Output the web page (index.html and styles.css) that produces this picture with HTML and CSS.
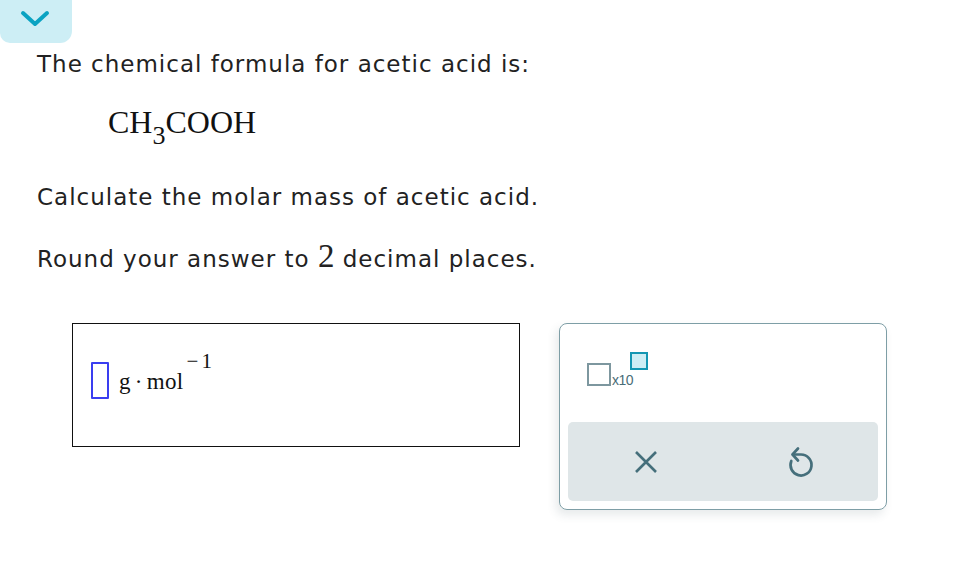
FILE: index.html
```html
<!DOCTYPE html>
<html>
<head>
<meta charset="utf-8">
<link rel="stylesheet" href="styles.css">
</head>
<body>
<div class="tab">
  <svg width="30" height="18" viewBox="0 0 30 18"><polyline points="3,3 15,14 27,3" fill="none" stroke="#0aa3c2" stroke-width="4" stroke-linecap="round" stroke-linejoin="round"/></svg>
</div>
<div class="content">
  <p class="line l1">The chemical formula for acetic acid is:</p>
  <div class="formula">CH<sub>3</sub>COOH</div>
  <p class="line l3">Calculate the molar mass of acetic acid.</p>
  <p class="line l4">Round your answer to <span class="num">2</span> decimal places.</p>
  <div class="answer-row">
    <div class="answer-box">
      <span class="cursor-box"></span>
      <span class="unit">g<span class="dot">·</span>mol<sup>− 1</sup></span>
    </div>
    <div class="panel">
      <div class="panel-top">
        <div class="sci">
          <span class="big-sq"></span>
          <span class="x10">x10</span>
          <span class="small-sq"></span>
        </div>
      </div>
      <div class="panel-bar">
        <div class="btn">
          <svg width="24" height="24" viewBox="0 0 24 24"><path d="M2 2 L22 22 M22 2 L2 22" stroke="#456f7b" stroke-width="2.6" fill="none"/></svg>
        </div>
        <div class="btn">
          <svg width="26" height="34" viewBox="0 0 26 34"><path d="M10 3.5 L4.5 9.5 L10 15.5" fill="none" stroke="#456f7b" stroke-width="2.7" stroke-linecap="round" stroke-linejoin="round"/><path d="M5 9.5 H13 A10.5 10.5 0 1 1 3.3 16" fill="none" stroke="#456f7b" stroke-width="2.7" stroke-linecap="round"/></svg>
        </div>
      </div>
    </div>
  </div>
</div>
</body>
</html>
```
FILE: styles.css
```css
html, body {
  margin: 0;
  padding: 0;
  background: #fff;
}
body {
  font-family: "DejaVu Sans", Verdana, sans-serif;
  color: #222;
  width: 954px;
  height: 564px;
  overflow: hidden;
}
.tab {
  width: 72px;
  height: 43px;
  background: #cdeef5;
  border-radius: 0 0 12px 10px;
  display: flex;
  justify-content: center;
  align-items: flex-start;
  padding-top: 10px;
  box-sizing: border-box;
}
.tab svg { margin-left: -2px; }
.content {
  padding-left: 37px;
}
.line {
  margin: 0;
  font-size: 23px;
  letter-spacing: 1px;
  line-height: 28px;
}
.l1 { margin-top: 7px; }
.formula {
  font-family: "Liberation Serif", "Times New Roman", serif;
  font-size: 32px;
  line-height: 36px;
  margin: 26px 0 0 71px;
  color: #111;
}
.formula sub {
  font-size: 26px;
  vertical-align: -11px;
  line-height: 0;
}
.l3 { margin-top: 43px; }
.l4 { margin-top: 34px; }
.num {
  font-family: "Liberation Serif", "Times New Roman", serif;
  font-size: 33px;
  letter-spacing: 0;
  line-height: 0;
}
.answer-row {
  display: flex;
  align-items: flex-start;
  margin-top: 50px;
  margin-left: 35px;
  gap: 39px;
}
.answer-box {
  width: 448px;
  height: 124px;
  border: 1px solid #111;
  box-sizing: border-box;
  display: flex;
  align-items: flex-start;
  padding: 38px 0 0 18px;
}
.cursor-box {
  width: 18px;
  height: 37px;
  border: 2px solid #3a3ef0;
  box-sizing: border-box;
  border-radius: 1px;
}
.unit {
  font-family: "Liberation Serif", "Times New Roman", serif;
  font-size: 23px;
  color: #111;
  margin-left: 10px;
  margin-top: 7px;
  line-height: 26px;
  letter-spacing: 0.3px;
}
.dot { margin: 0 4px; }
.unit sup {
  font-size: 21px;
  vertical-align: 0;
  position: relative;
  top: -21px;
  line-height: 0;
  margin-left: 3px;
  letter-spacing: -1px;
}
.panel {
  width: 328px;
  height: 187px;
  border: 1px solid #7e9ea6;
  border-radius: 8px;
  box-sizing: border-box;
  box-shadow: -3px 5px 10px rgba(60, 80, 90, 0.12);
  padding: 0 8px 8px 8px;
  display: flex;
  flex-direction: column;
}
.panel-top {
  height: 98px;
  padding: 28px 0 0 19px;
  box-sizing: border-box;
}
.sci {
  display: flex;
  align-items: flex-start;
  height: 36px;
}
.big-sq {
  width: 24px;
  height: 23px;
  border: 2.5px solid #7d979f;
  box-sizing: border-box;
  margin-top: 11px;
}
.x10 {
  font-family: "Liberation Sans", Arial, sans-serif;
  font-size: 14px;
  color: #4a6d78;
  margin-top: 20px;
  margin-left: 1px;
  letter-spacing: -0.5px;
}
.small-sq {
  width: 18px;
  height: 18px;
  border: 2.5px solid #1397b3;
  background: #cdeef5;
  box-sizing: border-box;
  margin-left: -3px;
}
.panel-bar {
  flex: 1;
  background: #dfe6e8;
  border-radius: 5px;
  display: flex;
}
.btn {
  flex: 1;
  display: flex;
  align-items: center;
  justify-content: center;
}
.btn svg { display: block; }
```
